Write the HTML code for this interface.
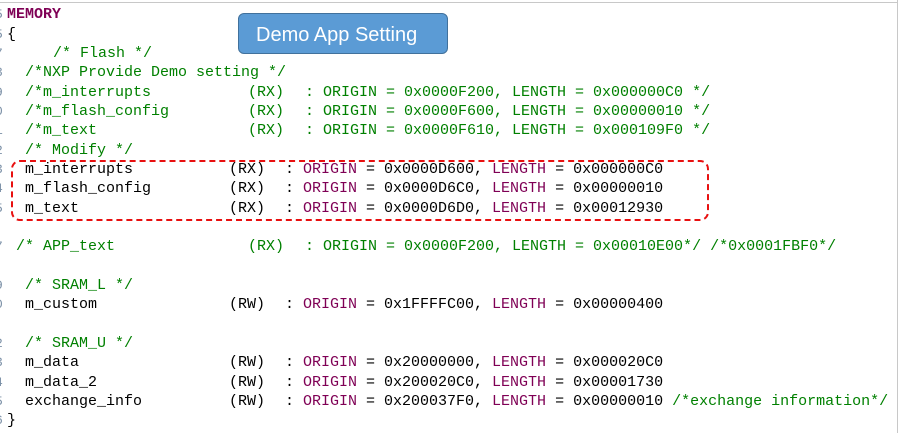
<!DOCTYPE html>
<html><head><meta charset="utf-8"><style>
html,body{margin:0;padding:0;background:#fff;width:904px;height:433px;overflow:hidden;position:relative;font-family:"Liberation Mono",monospace;font-size:15px;}
.l{position:absolute;left:0;width:897px;height:19.33px;line-height:19.33px;white-space:pre;overflow:hidden;margin-top:2px;}
.l span{position:absolute;top:0;}
.g{color:#008000}.p{color:#7f0055}.k{color:#000}
.n{color:#7a8fa6;left:-5px;font-size:13px}
b{font-weight:normal}
</style></head><body>
<div style="position:absolute;left:0;top:0;width:897px;height:2px;border-bottom:1px solid #c8c8c8"></div>
<div style="position:absolute;left:897px;top:0;width:1px;height:433px;background:#c8c8c8"></div>

<div class="l" style="top:3.3px"><span class="n">5</span><span class="p" style="left:7px;font-weight:bold">MEMORY</span></div>
<div class="l" style="top:22.6px"><span class="n">5</span><span style="left:7px">{</span></div>
<div class="l g" style="top:42px"><span class="n">7</span><span style="left:53px">/* Flash */</span></div>
<div class="l g" style="top:61.3px"><span class="n">8</span><span style="left:25px">/*NXP Provide Demo setting */</span></div>
<div class="l g" style="top:80.6px"><span class="n">9</span><span style="left:25px">/*m_interrupts</span><span style="left:248px">(RX)</span><span style="left:305px">: ORIGIN = 0x0000F200, LENGTH = 0x000000C0 */</span></div>
<div class="l g" style="top:100px"><span class="n">0</span><span style="left:25px">/*m_flash_config</span><span style="left:248px">(RX)</span><span style="left:305px">: ORIGIN = 0x0000F600, LENGTH = 0x00000010 */</span></div>
<div class="l g" style="top:119.3px"><span class="n">1</span><span style="left:25px">/*m_text</span><span style="left:248px">(RX)</span><span style="left:305px">: ORIGIN = 0x0000F610, LENGTH = 0x000109F0 */</span></div>
<div class="l g" style="top:138.6px"><span class="n">2</span><span style="left:25px">/* Modify */</span></div>
<div class="l" style="top:158px"><span class="n">3</span><span style="left:25px">m_interrupts</span><span style="left:229px">(RX)</span><span style="left:285px">:</span><span style="left:303px"><b class="p">ORIGIN</b> = 0x0000D600, <b class="p">LENGTH</b> = 0x000000C0</span></div>
<div class="l" style="top:177.3px"><span class="n">4</span><span style="left:25px">m_flash_config</span><span style="left:229px">(RX)</span><span style="left:285px">:</span><span style="left:303px"><b class="p">ORIGIN</b> = 0x0000D6C0, <b class="p">LENGTH</b> = 0x00000010</span></div>
<div class="l" style="top:196.6px"><span class="n">5</span><span style="left:25px">m_text</span><span style="left:229px">(RX)</span><span style="left:285px">:</span><span style="left:303px"><b class="p">ORIGIN</b> = 0x0000D6D0, <b class="p">LENGTH</b> = 0x00012930</span></div>
<div class="l g" style="top:235.3px"><span class="n">7</span><span style="left:16px">/* APP_text</span><span style="left:248px">(RX)</span><span style="left:305px">: ORIGIN = 0x0000F200, LENGTH = 0x00010E00*/ /*0x0001FBF0*/</span></div>
<div class="l g" style="top:274px"><span class="n">9</span><span style="left:25px">/* SRAM_L */</span></div>
<div class="l" style="top:293.3px"><span class="n">0</span><span style="left:25px">m_custom</span><span style="left:229px">(RW)</span><span style="left:285px">:</span><span style="left:303px"><b class="p">ORIGIN</b> = 0x1FFFFC00, <b class="p">LENGTH</b> = 0x00000400</span></div>
<div class="l g" style="top:332px"><span class="n">2</span><span style="left:25px">/* SRAM_U */</span></div>
<div class="l" style="top:351.3px"><span class="n">3</span><span style="left:25px">m_data</span><span style="left:229px">(RW)</span><span style="left:285px">:</span><span style="left:303px"><b class="p">ORIGIN</b> = 0x20000000, <b class="p">LENGTH</b> = 0x000020C0</span></div>
<div class="l" style="top:370.6px"><span class="n">4</span><span style="left:25px">m_data_2</span><span style="left:229px">(RW)</span><span style="left:285px">:</span><span style="left:303px"><b class="p">ORIGIN</b> = 0x200020C0, <b class="p">LENGTH</b> = 0x00001730</span></div>
<div class="l" style="top:390px"><span class="n">5</span><span style="left:25px">exchange_info</span><span style="left:229px">(RW)</span><span style="left:285px">:</span><span style="left:303px"><b class="p">ORIGIN</b> = 0x200037F0, <b class="p">LENGTH</b> = 0x00000010 <b class="g">/*exchange information*/</b></span></div>
<div class="l" style="top:409.3px"><span class="n">6</span><span style="left:7px">}</span></div>

<div style="position:absolute;left:11px;top:160px;width:694px;height:57px;border:2px dashed #e81010;border-radius:9px;"></div>

<div style="position:absolute;left:238px;top:13px;width:191px;height:39px;background:#5b9bd5;border:1px solid #41719c;border-radius:6px;color:#fff;font-family:'Liberation Sans',sans-serif;font-size:20px;line-height:42px;padding-left:17px;">Demo App Setting</div>
</body></html>
